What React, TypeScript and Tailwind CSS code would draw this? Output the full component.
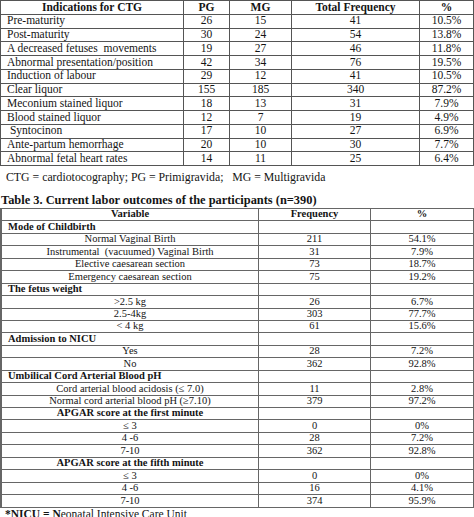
const ctgRows = [
  ["Pre-maturity", "26", "15", "41", "10.5%"],
  ["Post-maturity", "30", "24", "54", "13.8%"],
  ["A decreased fetuses  movements", "19", "27", "46", "11.8%"],
  ["Abnormal presentation/position", "42", "34", "76", "19.5%"],
  ["Induction of labour", "29", "12", "41", "10.5%"],
  ["Clear liquor", "155", "185", "340", "87.2%"],
  ["Meconium stained liquor", "18", "13", "31", "7.9%"],
  ["Blood stained liquor", "12", "7", "19", "4.9%"],
  [" Syntocinon", "17", "10", "27", "6.9%"],
  ["Ante-partum hemorrhage", "20", "10", "30", "7.7%"],
  ["Abnormal fetal heart rates", "14", "11", "25", "6.4%"]
];

type Row =
  | { kind: "cat"; label: string; center?: boolean }
  | { kind: "row"; label: string; freq: string; pct: string };

const outcomeRows: Row[] = [
  { kind: "cat", label: "Mode of Childbirth" },
  { kind: "row", label: "Normal Vaginal Birth", freq: "211", pct: "54.1%" },
  { kind: "row", label: "Instrumental  (vacuumed) Vaginal Birth", freq: "31", pct: "7.9%" },
  { kind: "row", label: "Elective caesarean section", freq: "73", pct: "18.7%" },
  { kind: "row", label: "Emergency caesarean section", freq: "75", pct: "19.2%" },
  { kind: "cat", label: "The fetus weight" },
  { kind: "row", label: ">2.5 kg", freq: "26", pct: "6.7%" },
  { kind: "row", label: "2.5-4kg", freq: "303", pct: "77.7%" },
  { kind: "row", label: "< 4 kg", freq: "61", pct: "15.6%" },
  { kind: "cat", label: "Admission to NICU" },
  { kind: "row", label: "Yes", freq: "28", pct: "7.2%" },
  { kind: "row", label: "No", freq: "362", pct: "92.8%" },
  { kind: "cat", label: "Umbilical Cord Arterial Blood pH" },
  { kind: "row", label: "Cord arterial blood acidosis (≤ 7.0)", freq: "11", pct: "2.8%" },
  { kind: "row", label: "Normal cord arterial blood pH (≥7.10)", freq: "379", pct: "97.2%" },
  { kind: "cat", label: "APGAR score at the first minute", center: true },
  { kind: "row", label: "≤ 3", freq: "0", pct: "0%" },
  { kind: "row", label: "4 -6", freq: "28", pct: "7.2%" },
  { kind: "row", label: "7-10", freq: "362", pct: "92.8%" },
  { kind: "cat", label: "APGAR score at the fifth minute", center: true },
  { kind: "row", label: "≤ 3", freq: "0", pct: "0%" },
  { kind: "row", label: "4 -6", freq: "16", pct: "4.1%" },
  { kind: "row", label: "7-10", freq: "374", pct: "95.9%" }
];

const cell1 = "border-r border-b border-[#555] flex items-center justify-center whitespace-pre";
const cell3 = "border-r border-b border-[#666] flex items-center justify-center whitespace-pre";

export default function App() {
  return (
    <div className="w-[474px] h-[517px] overflow-hidden bg-white text-[#141414] font-['Liberation_Serif','Times_New_Roman',serif]">
      <div className="grid w-[474px] grid-cols-[183px_46px_62px_128px_54px] auto-rows-[13.75px] border-t border-l border-[#555] text-[11.5px] leading-none">
        {["Indications for CTG", "PG", "MG", "Total Frequency", "%"].map((h) => (
          <div key={h} className={`${cell1} font-bold`}>{h}</div>
        ))}
        {ctgRows.map((r) =>
          r.map((v, i) => (
            <div key={r[0] + i} className={i === 0 ? `${cell1} justify-start pl-[6px]` : cell1}>
              {v}
            </div>
          ))
        )}
      </div>

      <p className="pt-[5px] pl-[6px] text-[11.8px] leading-[12px] whitespace-pre">
        CTG = cardiotocography; PG = Primigravida;   MG = Multigravida
      </p>
      <p className="mt-[10px] pl-[1px] text-[12.4px] leading-[14px] font-bold mb-[1px]">
        Table 3. Current labor outcomes of the participants (n=390)
      </p>

      <div className="grid w-[474px] grid-cols-[257px_112px_103px] auto-rows-[12.45px] border-t border-l-2 border-[#666] text-[10.5px] leading-none">
        <div className={`${cell3} font-bold`}>Variable</div>
        <div className={`${cell3} font-bold`}>Frequency</div>
        <div className={`${cell3} font-bold`}>%</div>
        {outcomeRows.map((r, i) =>
          r.kind === "cat" ? (
            [
              <div key={i + "a"} className={`${cell3} font-bold ${r.center ? "" : "justify-start pl-[6px]"}`}>{r.label}</div>,
              <div key={i + "b"} className={cell3} />,
              <div key={i + "c"} className={cell3} />
            ]
          ) : (
            [
              <div key={i + "a"} className={cell3}>{r.label}</div>,
              <div key={i + "b"} className={cell3}>{r.freq}</div>,
              <div key={i + "c"} className={cell3}>{r.pct}</div>
            ]
          )
        )}
      </div>

      <p className="pl-[5px] text-[11.5px] leading-[12px]">
        <span className="font-bold">*NICU = N</span>eonatal Intensive Care Unit
      </p>
    </div>
  );
}
